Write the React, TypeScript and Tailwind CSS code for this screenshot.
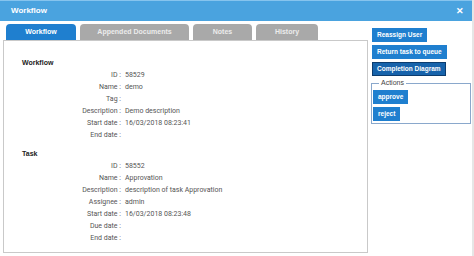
import React from "react";

const workflowRows = [
  ["ID", "58529"],
  ["Name", "demo"],
  ["Tag", ""],
  ["Description", "Demo description"],
  ["Start date", "16/03/2018 08:23:41"],
  ["End date", ""],
];

const taskRows = [
  ["ID", "58552"],
  ["Name", "Approvation"],
  ["Description", "description of task Approvation"],
  ["Assignee", "admin"],
  ["Start date", "16/03/2018 08:23:48"],
  ["Due date", ""],
  ["End date", ""],
];

const tabs = [
  { label: "Workflow", w: "w-[70px]", active: true },
  { label: "Appended Documents", w: "w-[109px]", active: false },
  { label: "Notes", w: "w-[59px]", active: false },
  { label: "History", w: "w-[62px]", active: false },
];

function Section({ title, rows }: { title: string; rows: string[][] }) {
  return (
    <div>
      <div className="pl-[18px] h-[12px] leading-[12px] text-[7px] font-bold text-[#222] font-['Liberation_Sans',sans-serif]">
        {title}
      </div>
      <div className="grid grid-cols-[117px_1fr]">
        {rows.map(([label, value], i) => (
          <React.Fragment key={i}>
            <div className="h-[12px] leading-[12px] text-right">{label} :</div>
            <div className="h-[12px] leading-[12px] pl-[4px]">{value}</div>
          </React.Fragment>
        ))}
      </div>
    </div>
  );
}

function BlueButton({ text, dark }: { text: string; dark?: boolean }) {
  return (
    <button
      className={`h-[14px] px-[4px] text-[6.5px] font-bold text-white leading-none border font-['Liberation_Sans',sans-serif] ${
        dark ? "bg-[#1763ab] border-[#0c3c6e]" : "bg-[#1f7fcf] border-[#1f7fcf]"
      }`}
    >
      {text}
    </button>
  );
}

export default function App() {
  return (
    <div className="w-[474px] h-[256px] bg-white border-r-2 border-[#e6e6e6] overflow-hidden flex flex-col">
      {/* Title bar */}
      <div className="h-[21px] shrink-0 bg-[#4aa3df] border-t border-[#86c4ee] flex items-center justify-between pl-[11px] pr-[8px]">
        <span className="text-[8px] font-bold text-white font-['Liberation_Sans',sans-serif]">Workflow</span>
        <span className="text-[9px] font-bold text-white leading-none font-['Liberation_Sans',sans-serif]">✕</span>
      </div>

      <div className="flex flex-1 pt-[3px] pl-[3px]">
        {/* Left: tabs + panel */}
        <div className="w-[365px] flex flex-col">
          <div className="flex gap-[4px] pl-[3px] h-[16px]">
            {tabs.map((t) => (
              <div
                key={t.label}
                className={`${t.w} h-[16px] rounded-t-[4px] flex items-center justify-center text-[7px] font-bold font-['Liberation_Sans',sans-serif] ${
                  t.active ? "bg-[#1f7fcf] text-white" : "bg-[#a9a9a9] text-[#ececec]"
                }`}
              >
                {t.label}
              </div>
            ))}
          </div>
          <div className="h-[213px] border border-[#c9c9c9] pt-[16px] text-[7px] text-[#555] font-['Roboto',sans-serif]">
            <Section title="Workflow" rows={workflowRows} />
            <div className="h-[7px]" />
            <Section title="Task" rows={taskRows} />
          </div>
        </div>

        {/* Right: actions */}
        <div className="flex-1 pl-[3px] pt-[4px] flex flex-col items-start">
          <div className="pl-[1px] flex flex-col items-start gap-[3px]">
            <BlueButton text="Reassign User" />
            <BlueButton text="Return task to queue" />
            <BlueButton text="Completion Diagram" dark />
          </div>
          <fieldset className="mt-[2px] w-[100px] border border-[#8aa8cc] pl-[1px] pb-[2px] pt-[2px]">
            <legend className="ml-[6px] px-[2px] text-[7px] text-[#444] leading-[10px] font-['Liberation_Sans',sans-serif]">
              Actions
            </legend>
            <div className="flex flex-col items-start gap-[3px]">
              <BlueButton text="approve" />
              <BlueButton text="reject" />
            </div>
          </fieldset>
        </div>
      </div>
    </div>
  );
}
